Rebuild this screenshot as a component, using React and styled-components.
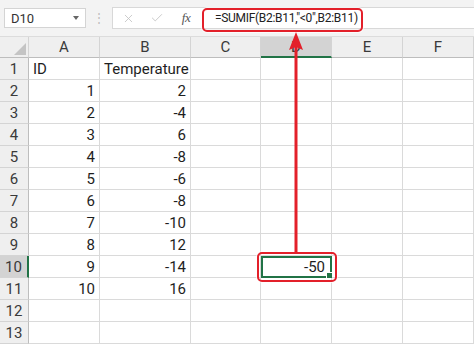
import React from 'react';
import styled, { createGlobalStyle } from 'styled-components';
import { X, Check } from 'lucide-react';

const GlobalStyle = createGlobalStyle`
  html, body {
    margin: 0;
    padding: 0;
    background: #fff;
    overflow: hidden;
  }
  body {
    font-family: Roboto, "Liberation Sans", sans-serif;
  }
`;

const RED = '#e3202a';
const GREEN = '#217346';

const Page = styled.div`
  position: relative;
  width: 474px;
  height: 344px;
  overflow: hidden;
  background: #fff;
`;

const Toolbar = styled.div`
  height: 36px;
  background: #f3f3f3;
  border-bottom: 1px solid #dcdcdc;
  display: flex;
  align-items: center;
`;

const NameBox = styled.div`
  box-sizing: border-box;
  width: 82px;
  height: 20px;
  margin-left: 4px;
  background: #fff;
  border: 1px solid #d4d4d4;
  display: flex;
  align-items: center;
  justify-content: space-between;
  padding: 0 6px 0 6px;
  font-size: 13px;
  color: #333;
`;

const Caret = styled.span`
  width: 0;
  height: 0;
  border-left: 3px solid transparent;
  border-right: 3px solid transparent;
  border-top: 4px solid #666;
`;

const Grip = styled.div`
  width: 26px;
  display: flex;
  justify-content: center;
  color: #bdbdbd;
  font-size: 12px;
  line-height: 1;
`;

const FormulaBar = styled.div`
  flex: 1;
  height: 20px;
  background: #fff;
  border: 1px solid #d8d8d8;
  border-right: none;
  display: flex;
  align-items: center;
`;

const BarIcon = styled.span`
  width: ${p => p.$w}px;
  display: flex;
  justify-content: center;
  color: ${p => p.$color || '#c2c2c2'};
`;

const Fx = styled.span`
  font-family: "Liberation Serif", serif;
  font-style: italic;
  font-size: 13px;
  color: #555;
  letter-spacing: -0.5px;
`;

const FormulaText = styled.span`
  margin-left: 14px;
  font-size: 12px;
  letter-spacing: -0.3px;
  color: #222;
`;

const Sheet = styled.div`
  display: grid;
  grid-template-columns: 29px 71px 91px 70px 71px 71px 71px;
  grid-template-rows: 21px repeat(13, 22px);
`;

const HeadCell = styled.div`
  box-sizing: border-box;
  background: ${p => (p.$active ? '#d3d3d3' : '#efefef')};
  border-right: 1px solid #d4d4d4;
  border-bottom: ${p => (p.$active ? `2px solid ${GREEN}` : '1px solid #bdbdbd')};
  display: flex;
  align-items: center;
  justify-content: center;
  font-size: 15px;
  color: #3a3a3a;
  position: relative;
`;

const RowHead = styled.div`
  box-sizing: border-box;
  background: ${p => (p.$active ? '#d3d3d3' : '#efefef')};
  border-right: ${p => (p.$active ? `2px solid ${GREEN}` : '1px solid #bdbdbd')};
  border-bottom: 1px solid #d4d4d4;
  display: flex;
  align-items: center;
  justify-content: center;
  font-size: 15px;
  color: #3a3a3a;
`;

const Cell = styled.div`
  box-sizing: border-box;
  position: relative;
  border-right: 1px solid #dadada;
  border-bottom: 1px solid #dadada;
  display: flex;
  align-items: center;
  justify-content: ${p => (p.$num ? 'flex-end' : 'flex-start')};
  padding: 1px 4px 0 4px;
  font-size: 15px;
  color: #1e1e1e;
  ${p => p.$selected && `
    outline: 2px solid ${GREEN};
    outline-offset: -2px;
    padding-right: 6px;
  `}
`;

const FillHandle = styled.span`
  position: absolute;
  right: -2px;
  bottom: -2px;
  width: 5px;
  height: 5px;
  background: ${GREEN};
  border: 1px solid #fff;
`;

const Callout = styled.div`
  position: absolute;
  box-sizing: border-box;
  border: 2px solid ${RED};
  border-radius: 5px;
  box-shadow: 0 0 0 1px rgba(255, 255, 255, 0.7);
  pointer-events: none;
`;

const ArrowSvg = styled.svg`
  position: absolute;
  left: 285px;
  top: 31px;
  overflow: visible;
`;

const temps = [2, -4, 6, -8, -6, -8, -10, 12, -14, 16];
const cols = ['A', 'B', 'C', 'D', 'E', 'F'];

export default function App() {
  const rows = [];
  for (let r = 1; r <= 13; r++) {
    let a = '';
    let b = '';
    if (r === 1) {
      a = 'ID';
      b = 'Temperature';
    } else if (r <= 11) {
      a = r - 1;
      b = temps[r - 2];
    }
    rows.push(
      <React.Fragment key={r}>
        <RowHead $active={r === 10}>{r}</RowHead>
        <Cell $num={r > 1}>{a}</Cell>
        <Cell $num={r > 1}>{b}</Cell>
        <Cell />
        {r === 10 ? (
          <Cell $num $selected>
            -50
            <FillHandle />
          </Cell>
        ) : (
          <Cell />
        )}
        <Cell />
        <Cell />
      </React.Fragment>
    );
  }

  return (
    <Page>
      <GlobalStyle />
      <Toolbar>
        <NameBox>
          D10
          <Caret />
        </NameBox>
        <Grip>⋮</Grip>
        <FormulaBar>
          <BarIcon $w={30}>
            <X size={13} strokeWidth={1.5} />
          </BarIcon>
          <BarIcon $w={28}>
            <Check size={14} strokeWidth={1.5} />
          </BarIcon>
          <BarIcon $w={30} $color="#555">
            <Fx>fx</Fx>
          </BarIcon>
          <FormulaText>=SUMIF(B2:B11,"&lt;0",B2:B11)</FormulaText>
        </FormulaBar>
      </Toolbar>
      <Sheet>
        <HeadCell>
          <svg width="29" height="21" style={{ position: 'absolute', left: 0, top: 0 }}>
            <polygon points="26,6 26,18 14,18" fill="#c4c4c4" />
          </svg>
        </HeadCell>
        {cols.map(c => (
          <HeadCell key={c} $active={c === 'D'}>{c}</HeadCell>
        ))}
        {rows}
      </Sheet>

      <Callout style={{ left: 202, top: 8, width: 161, height: 24 }} />
      <Callout style={{ left: 257, top: 252, width: 80, height: 30 }} />
      <ArrowSvg width="22" height="222">
        <line x1="11" y1="16" x2="11" y2="221" stroke={RED} strokeWidth="3" />
        <polygon points="11,1 18,19 11,16 4,19" fill={RED} />
      </ArrowSvg>
    </Page>
  );
}
